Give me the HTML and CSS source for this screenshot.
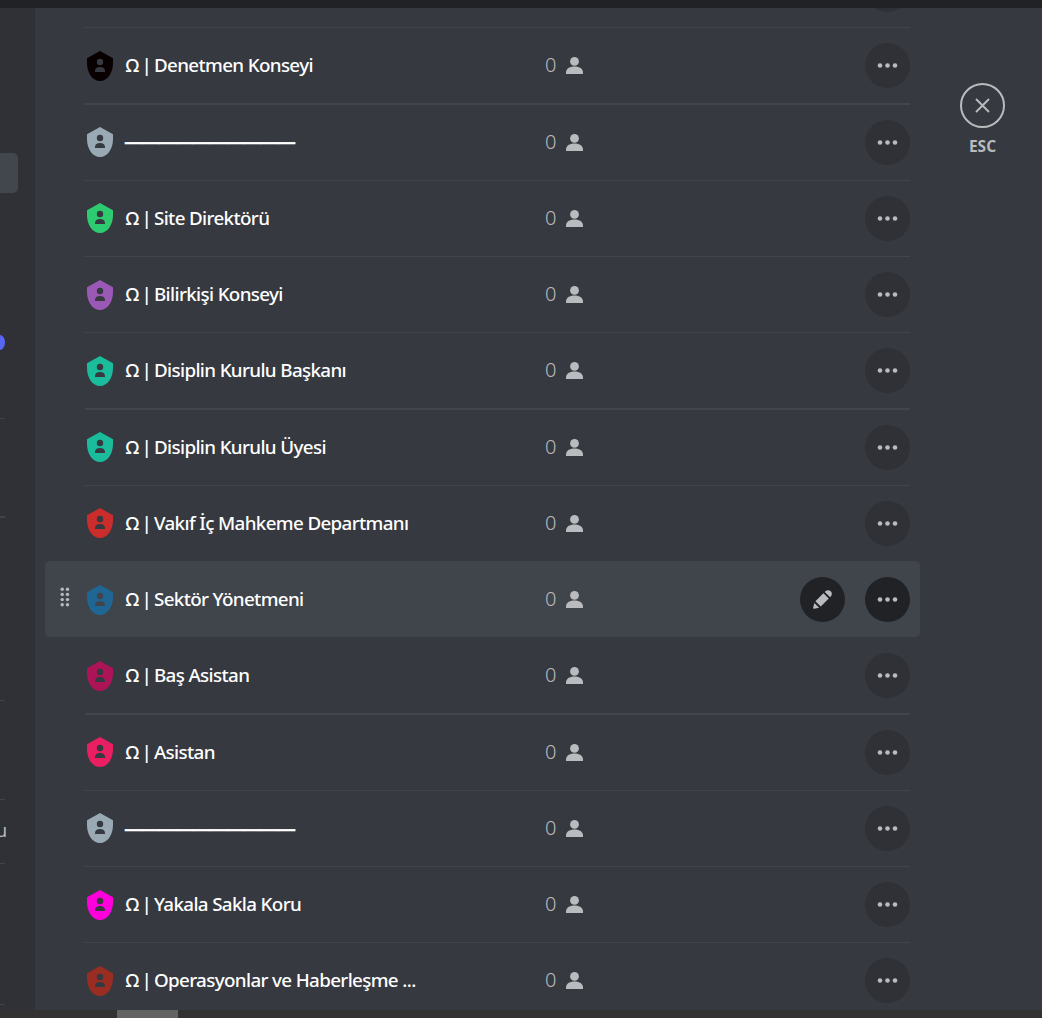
FILE: index.html
```html
<!DOCTYPE html>
<html lang="tr">
<head>
    <meta charset="UTF-8">
    <meta name="viewport" content="width=device-width, initial-scale=1.0">
    <title>Roller</title>
    <link rel="stylesheet" href="styles.css">
</head>
<body>
    <!-- Shared icons -->
    <svg class="sprite">
        <symbol id="shield" viewBox="0 0 26 30">
            <path fill="currentColor" fill-rule="evenodd" d="M13 0L26 7.2V12C26 22 20.5 30 13 30S0 22 0 12V7.2ZM13 7.8A3.2 3.2 0 1 0 13 14.2A3.2 3.2 0 1 0 13 7.8ZM8 21H18V20C18 17.3 16 16 13 16S8 17.3 8 20Z"/>
        </symbol>
        <symbol id="person" viewBox="0 0 17 17">
            <circle cx="8.5" cy="4.4" r="4.4" fill="currentColor"/>
            <path fill="currentColor" d="M0 17V15.6C0 11.8 3.4 9.6 8.5 9.6S17 11.8 17 15.6V17Z"/>
        </symbol>
        <symbol id="dots" viewBox="0 0 21 7">
            <circle cx="3" cy="3.5" r="2.3" fill="currentColor"/>
            <circle cx="10.5" cy="3.5" r="2.3" fill="currentColor"/>
            <circle cx="18" cy="3.5" r="2.3" fill="currentColor"/>
        </symbol>
        <symbol id="pencil" viewBox="0 0 24 24">
            <path fill="currentColor" d="M19.29 9.83L19.94 9.18C21.35 7.77 21.35 5.47 19.94 4.06C18.53 2.65 16.23 2.65 14.82 4.06L14.17 4.71L19.29 9.83ZM12.9 5.98L5.18 13.69L10.31 18.81L18.02 11.1L12.9 5.98ZM4.12 20.97L8.76 19.81L4.19 15.24L3.03 19.88C2.95 20.19 3.04 20.51 3.26 20.73C3.49 20.96 3.81 21.05 4.12 20.97Z"/>
        </symbol>
        <symbol id="grip" viewBox="0 0 10 20">
            <g fill="currentColor">
                <circle cx="2.2" cy="2.2" r="1.7"/><circle cx="7.5" cy="2.2" r="1.7"/>
                <circle cx="2.2" cy="7.4" r="1.7"/><circle cx="7.5" cy="7.4" r="1.7"/>
                <circle cx="2.2" cy="12.6" r="1.7"/><circle cx="7.5" cy="12.6" r="1.7"/>
                <circle cx="2.2" cy="17.8" r="1.7"/><circle cx="7.5" cy="17.8" r="1.7"/>
            </g>
        </symbol>
    </svg>

    <div class="titlebar"></div>
    <div class="main">
        <div class="sidebar">
            <div class="selected"></div>
            <div class="badge"></div>
            <div class="line line-1"></div>
            <div class="line line-2"></div>
            <div class="line line-3"></div>
            <div class="line line-4"></div>
            <div class="item">u</div>
            <div class="line line-5"></div>
            <div class="line line-6"></div>
        </div>

        <div class="roles" id="roles"></div>

        <div class="close">
            <div class="close-button">
                <svg width="15" height="15" viewBox="0 0 15 15"><path d="M1 1L14 14M14 1L1 14" stroke="currentColor" stroke-width="1.9"/></svg>
            </div>
            <div class="esc">ESC</div>
        </div>
    </div>
    <div class="scrollbar"><div class="thumb"></div></div>

    <script src="script.js"></script>
</body>
</html>
```
FILE: styles.css
```css
* {
    margin: 0;
    padding: 0;
    box-sizing: border-box;
}

body {
    height: 1018px;
    overflow: hidden;
    display: flex;
    flex-direction: column;
    background: #36393f;
    color: #b9bbbe;
    font-family: "Noto Sans", "Open Sans", sans-serif;
}

svg {
    display: block;
}

.sprite {
    display: none;
}

.titlebar {
    height: 8px;
    background: #202225;
}

.main {
    height: 1002px;
    display: flex;
    overflow: hidden;
}

/* Sidebar */
.sidebar {
    width: 35px;
    background: #2f3136;
}

.selected {
    width: 18px;
    height: 40px;
    margin-top: 145px;
    background: #42464d;
    border-radius: 0 5px 5px 0;
}

.badge {
    width: 5px;
    height: 15px;
    margin-top: 142px;
    background: #5865f2;
    border-radius: 0 5px 5px 0 / 0 7.5px 7.5px 0;
}

.line {
    width: 5px;
    height: 1px;
    background: #40434a;
}

.line-1 { margin-top: 68px; }
.line-2 { margin-top: 97px; height: 2px; }
.line-3 { margin-top: 182px; }
.line-4 { margin-top: 98px; }
.line-5 { margin-top: 18px; }
.line-6 { margin-top: 140px; }

.item {
    height: 25px;
    margin-top: 20px;
    margin-left: -4px;
    font-size: 18px;
    line-height: 21px;
}

/* Role list */
.roles {
    width: 875px;
    margin-left: 10px;
    margin-top: -57.25px;
}

.role {
    height: 76.25px;
    display: flex;
    padding-right: 10px;
    border-radius: 5px;
}

.handle {
    width: 40px;
    padding: 26px 0 0 15px;
    color: #b9bbbe;
}

.handle svg {
    visibility: hidden;
}

.content {
    flex: 1;
    display: flex;
    border-top: 1px solid #42454c;
}

.role:nth-child(4n+3) .content {
    border-top-width: 2px;
}

.role:nth-child(4n+3) .content > * {
    margin-top: -1px;
}

.shield {
    width: 40px;
    padding: 22.9px 0 0 2px;
}

.name {
    width: 420px;
    padding-top: 22.4px;
    color: #fff;
    font-size: 18.8px;
    font-weight: 500;
    letter-spacing: -0.64px;
    line-height: 30px;
    white-space: nowrap;
}

.prefix {
    margin-left: 0.5px;
    word-spacing: -1.4px;
}

.divider {
    padding-top: 24px;
    font-family: "Liberation Sans", sans-serif;
    font-size: 17px;
    letter-spacing: 0;
    font-weight: 700;
    -webkit-text-stroke: 0.5px #fff;
}

.members {
    flex: 1;
    display: flex;
    gap: 10px;
    padding-top: 22.3px;
    font-size: 20px;
    font-weight: 350;
    line-height: 30px;
}

.members span {
    width: 11px;
}

.members svg {
    margin-top: 7px;
}

.actions {
    display: flex;
    gap: 20px;
    padding-top: 15.3px;
}

.button {
    width: 45px;
    height: 45px;
    display: flex;
    align-items: center;
    justify-content: center;
    border-radius: 50%;
    background: #2f3136;
}

.role.active {
    background: #40444b;
}

.role.active .content,
.role.active + .role .content {
    border-color: transparent;
}

.role.active .handle svg {
    visibility: visible;
}

.role.active .button {
    background: #202225;
}

/* Close button */
.close {
    margin: 75px 0 0 40px;
    width: 45px;
}

.close-button {
    height: 45px;
    display: flex;
    align-items: center;
    justify-content: center;
    border: 2px solid #b9bbbe;
    border-radius: 50%;
}

.esc {
    margin-top: 7px;
    text-align: center;
    font-family: "Open Sans", sans-serif;
    font-size: 15.5px;
    font-weight: 700;
    font-stretch: 92%;
    line-height: 22px;
}

.scrollbar {
    height: 8px;
    background: #323232;
}

.thumb {
    width: 61px;
    height: 8px;
    margin-left: 117px;
    background: #636363;
}
```
FILE: script.js
```js
const line = '—'.repeat(10);
const prefix = '<span class="prefix">Ω | </span>';

const roles = [
    { name: '', color: '#99aab5' },
    { name: prefix + 'Denetmen Konseyi', color: '#080000' },
    { name: line, color: '#99aab5' },
    { name: prefix + 'Site Direktörü', color: '#2ecc71' },
    { name: prefix + 'Bilirkişi Konseyi', color: '#9b59b6' },
    { name: prefix + 'Disiplin Kurulu Başkanı', color: '#1abc9c' },
    { name: prefix + 'Disiplin Kurulu Üyesi', color: '#1abc9c' },
    { name: prefix + 'Vakıf İç Mahkeme Departmanı', color: '#cb2d2d' },
    { name: prefix + 'Sektör Yönetmeni', color: '#206694', active: true },
    { name: prefix + 'Baş Asistan', color: '#ad1457' },
    { name: prefix + 'Asistan', color: '#e91e63' },
    { name: line, color: '#99aab5' },
    { name: prefix + 'Yakala Sakla Koru', color: '#ff00dc' },
    { name: prefix + 'Operasyonlar ve Haberleşme ...', color: '#992d22' }
];

const icon = (id, w, h) => `<svg width="${w}" height="${h}"><use href="#${id}"/></svg>`;

document.getElementById('roles').innerHTML = roles.map(role => `
    <div class="role ${role.active ? 'active' : ''}">
        <div class="handle">${icon('grip', 10, 20)}</div>
        <div class="content">
            <div class="shield" style="color: ${role.color}">${icon('shield', 26, 30)}</div>
            <div class="name ${role.name === line ? 'divider' : ''}">${role.name}</div>
            <div class="members">${role.name ? '<span>0</span>' : ''}${icon('person', 17, 17)}</div>
            <div class="actions">
                ${role.active ? `<div class="button">${icon('pencil', 25, 25)}</div>` : ''}
                <div class="button">${icon('dots', 21, 7)}</div>
            </div>
        </div>
    </div>
`).join('');
```
